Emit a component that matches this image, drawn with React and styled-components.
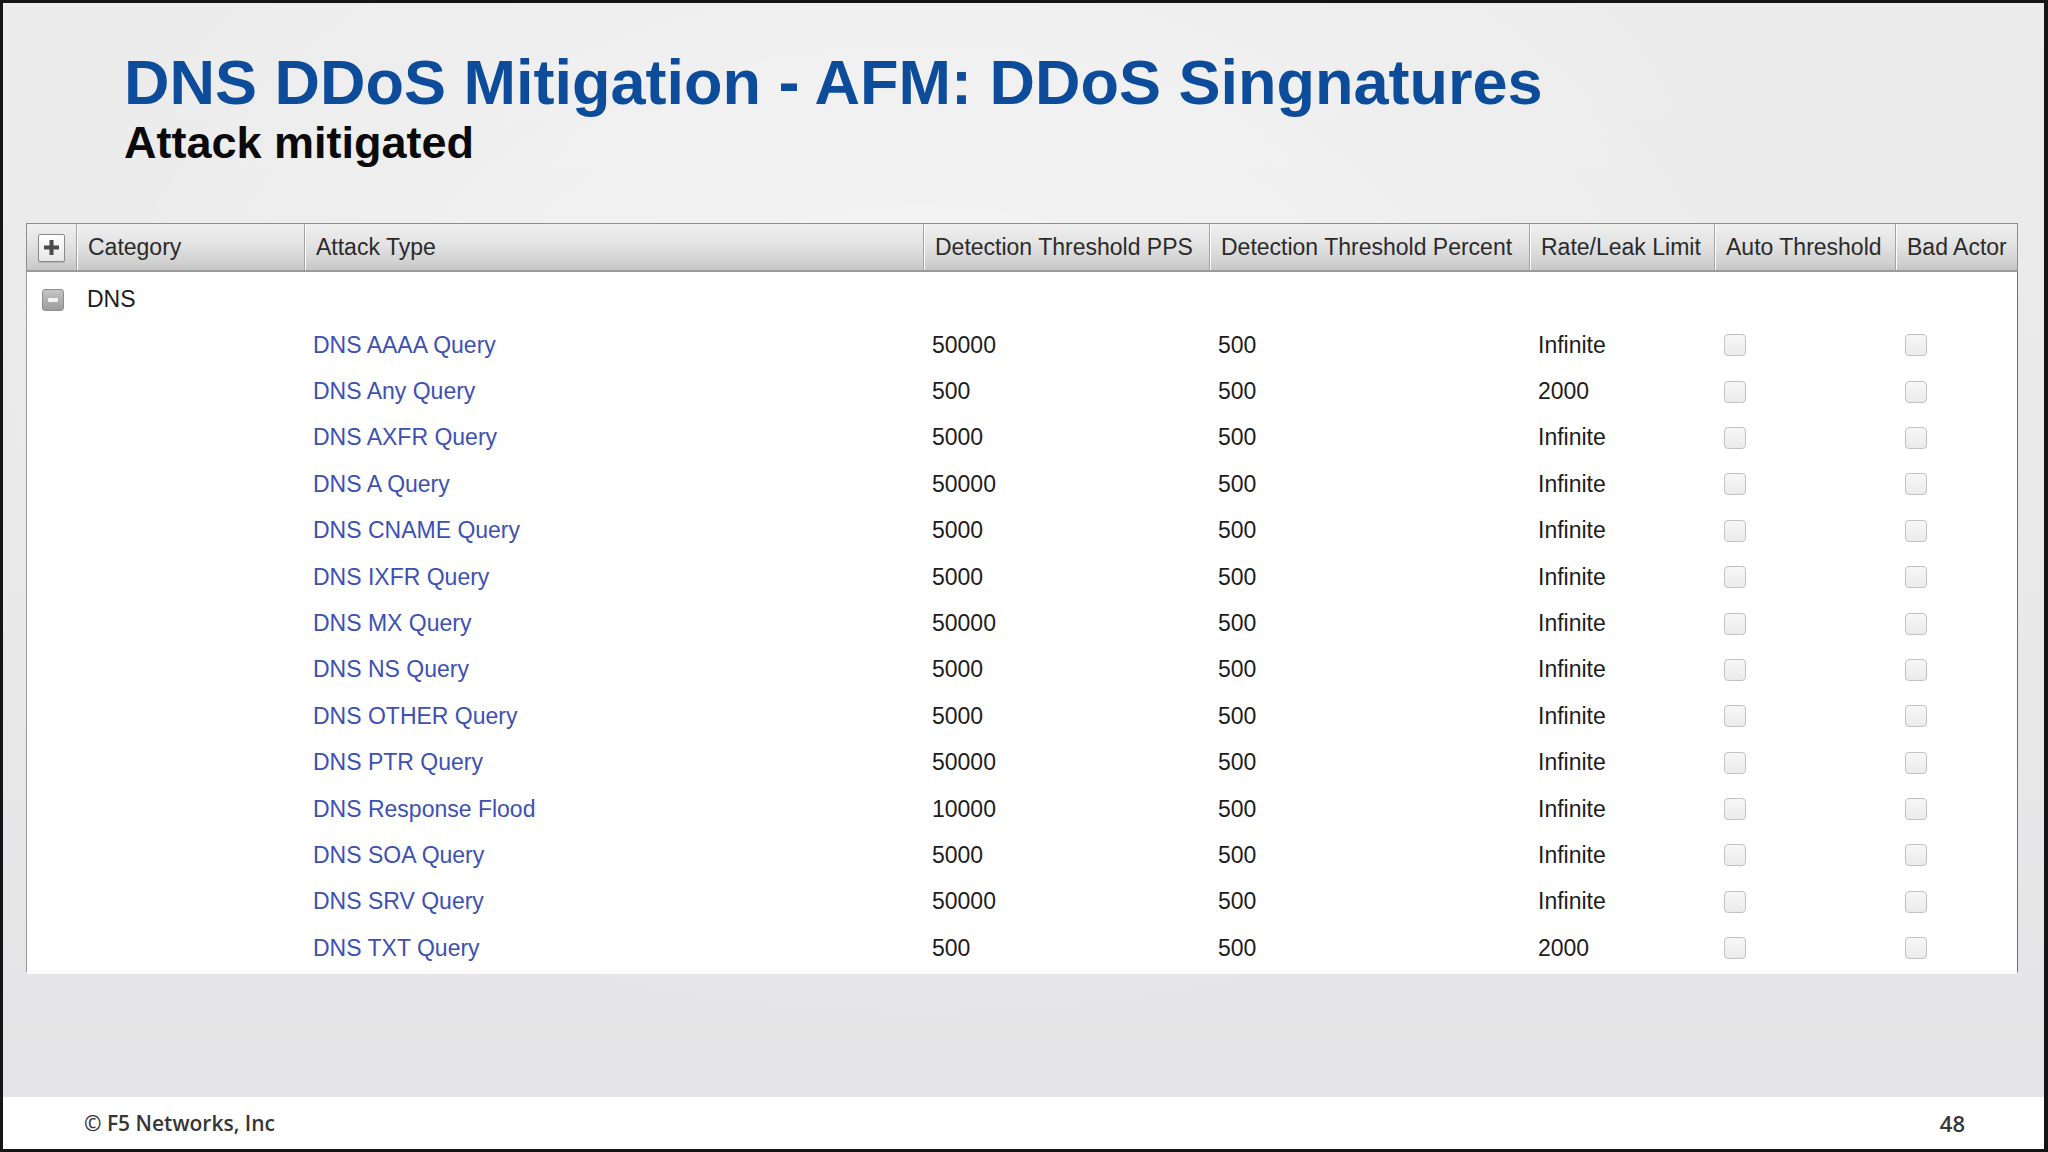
import React from 'react';
import styled, { createGlobalStyle } from 'styled-components';

const GlobalStyle = createGlobalStyle`
  html, body {
    margin: 0;
    padding: 0;
    background: #111;
  }
  * {
    box-sizing: border-box;
  }
`;

const COLS = '50px 228px 619px 286px 320px 185px 181px 123px';

const Slide = styled.div`
  width: 2048px;
  height: 1152px;
  border: 3px solid #151515;
  border-right-width: 4px;
  display: flex;
  flex-direction: column;
  font-family: "Liberation Sans", Arial, sans-serif;
  background:
    radial-gradient(ellipse at 45% 35%, rgba(255, 255, 255, 0.55), rgba(255, 255, 255, 0) 60%),
    linear-gradient(180deg, #ececec 0%, #e8e8e9 60%, #e4e4e6 100%);
`;

const Main = styled.main`
  flex: 1;
  display: flex;
  flex-direction: column;
`;

const TitleBlock = styled.header`
  padding: 48px 0 0 121px;
  display: flex;
  flex-direction: column;
  gap: 6px;
`;

const Title = styled.h1`
  margin: 0;
  font-size: 63px;
  line-height: 63px;
  font-weight: 700;
  color: #0c4c9b;
`;

const Subtitle = styled.h2`
  margin: 0;
  font-size: 45px;
  line-height: 45px;
  font-weight: 700;
  color: #0a0a0a;
`;

const Grid = styled.div`
  width: 1992px;
  margin: 58px 0 0 23px;
`;

const HeaderRow = styled.div`
  display: grid;
  grid-template-columns: ${COLS};
  height: 49px;
  border: 1px solid #8e8e8e;
  border-bottom: 2px solid #9a9a9a;
  background: linear-gradient(180deg, #efefef 0%, #e3e3e3 45%, #d0d0d0 85%, #c6c6c6 100%);
`;

const HeaderCell = styled.div`
  display: flex;
  align-items: center;
  padding-left: ${p => (p.$icon ? '0' : '10px')};
  padding-top: 1px;
  justify-content: ${p => (p.$icon ? 'center' : 'flex-start')};
  font-size: 23px;
  color: #2b2b2b;
  white-space: nowrap;
  overflow: hidden;
  border-left: ${p => (p.$first ? 'none' : '1px solid #ffffff')};
  border-right: ${p => (p.$last ? 'none' : '1px solid #a3a3a3')};
`;

const PlusButton = styled.div`
  width: 27px;
  height: 28px;
  border: 1px solid #8a8a8a;
  border-radius: 2px;
  background: linear-gradient(180deg, #ffffff, #e6e6e6);
  display: flex;
  align-items: center;
  justify-content: center;
  box-shadow: 0 1px 1px rgba(0, 0, 0, 0.15);
`;

const Body = styled.div`
  background: #ffffff;
  border-left: 1px solid #9c9c9c;
  border-right: 1px solid #6e6e6e;
  border-bottom: 3px solid #fbfbfb;
`;

const Row = styled.div`
  display: grid;
  grid-template-columns: ${COLS};
  height: ${p => (p.$group ? '50px' : '46.4px')};
  padding-top: ${p => (p.$group ? '5px' : '0')};
  align-items: center;
`;

const Cell = styled.div`
  padding-left: ${p => p.$pad || '8px'};
  font-size: 23px;
  color: ${p => (p.$link ? '#3d50b3' : '#1c1c1c')};
  white-space: nowrap;
  display: flex;
  align-items: center;
`;

const MinusButton = styled.div`
  width: 22px;
  height: 22px;
  margin-left: 15px;
  border-radius: 3px;
  border: 1px solid #8f8f8f;
  background: linear-gradient(180deg, #c4c4c4, #9c9c9c);
  display: flex;
  align-items: center;
  justify-content: center;

  &::after {
    content: '';
    width: 10px;
    height: 4px;
    background: #f4f4f4;
    border-radius: 1px;
  }
`;

const Checkbox = styled.span`
  width: 22px;
  height: 22px;
  border: 1px solid #c2c2c2;
  border-radius: 4px;
  background: linear-gradient(180deg, #f7f7f7, #ebebeb);
`;

const Footer = styled.footer`
  height: 52px;
  background: #ffffff;
  display: flex;
  align-items: center;
  justify-content: space-between;
  padding: 0 79px 0 81px;
  font-family: "Open Sans", "Liberation Sans", sans-serif;
  font-weight: 600;
  font-size: 21px;
  color: #363636;
`;

const PageNum = styled.span`
  font-size: 22px;
`;

const columns = [
  'Category',
  'Attack Type',
  'Detection Threshold PPS',
  'Detection Threshold Percent',
  'Rate/Leak Limit',
  'Auto Threshold',
  'Bad Actor',
];

const attacks = [
  { name: 'DNS AAAA Query', pps: '50000', pct: '500', rate: 'Infinite' },
  { name: 'DNS Any Query', pps: '500', pct: '500', rate: '2000' },
  { name: 'DNS AXFR Query', pps: '5000', pct: '500', rate: 'Infinite' },
  { name: 'DNS A Query', pps: '50000', pct: '500', rate: 'Infinite' },
  { name: 'DNS CNAME Query', pps: '5000', pct: '500', rate: 'Infinite' },
  { name: 'DNS IXFR Query', pps: '5000', pct: '500', rate: 'Infinite' },
  { name: 'DNS MX Query', pps: '50000', pct: '500', rate: 'Infinite' },
  { name: 'DNS NS Query', pps: '5000', pct: '500', rate: 'Infinite' },
  { name: 'DNS OTHER Query', pps: '5000', pct: '500', rate: 'Infinite' },
  { name: 'DNS PTR Query', pps: '50000', pct: '500', rate: 'Infinite' },
  { name: 'DNS Response Flood', pps: '10000', pct: '500', rate: 'Infinite' },
  { name: 'DNS SOA Query', pps: '5000', pct: '500', rate: 'Infinite' },
  { name: 'DNS SRV Query', pps: '50000', pct: '500', rate: 'Infinite' },
  { name: 'DNS TXT Query', pps: '500', pct: '500', rate: '2000' },
];

const App = () => {
  return (
    <>
      <GlobalStyle />
      <Slide>
        <Main>
          <TitleBlock>
            <Title>DNS DDoS Mitigation - AFM: DDoS Singnatures</Title>
            <Subtitle>Attack mitigated</Subtitle>
          </TitleBlock>

          <Grid>
            <HeaderRow>
              <HeaderCell $icon $first>
                <PlusButton>
                  <svg width="15" height="15" viewBox="0 0 15 15">
                    <path d="M5.5 0h4v5.5H15v4H9.5V15h-4V9.5H0v-4h5.5z" fill="#4a4a4a" />
                  </svg>
                </PlusButton>
              </HeaderCell>
              {columns.map((col, i) => (
                <HeaderCell key={col} $last={i === columns.length - 1}>
                  {col}
                </HeaderCell>
              ))}
            </HeaderRow>

            <Body>
              <Row $group>
                <Cell $pad="0">
                  <MinusButton />
                </Cell>
                <Cell $pad="10px">DNS</Cell>
              </Row>
              {attacks.map(a => (
                <Row key={a.name}>
                  <Cell />
                  <Cell />
                  <Cell $link>{a.name}</Cell>
                  <Cell>{a.pps}</Cell>
                  <Cell>{a.pct}</Cell>
                  <Cell>{a.rate}</Cell>
                  <Cell $pad="9px"><Checkbox /></Cell>
                  <Cell $pad="9px"><Checkbox /></Cell>
                </Row>
              ))}
            </Body>
          </Grid>
        </Main>

        <Footer>
          <span>© F5 Networks, Inc</span>
          <PageNum>48</PageNum>
        </Footer>
      </Slide>
    </>
  );
};

export default App;
